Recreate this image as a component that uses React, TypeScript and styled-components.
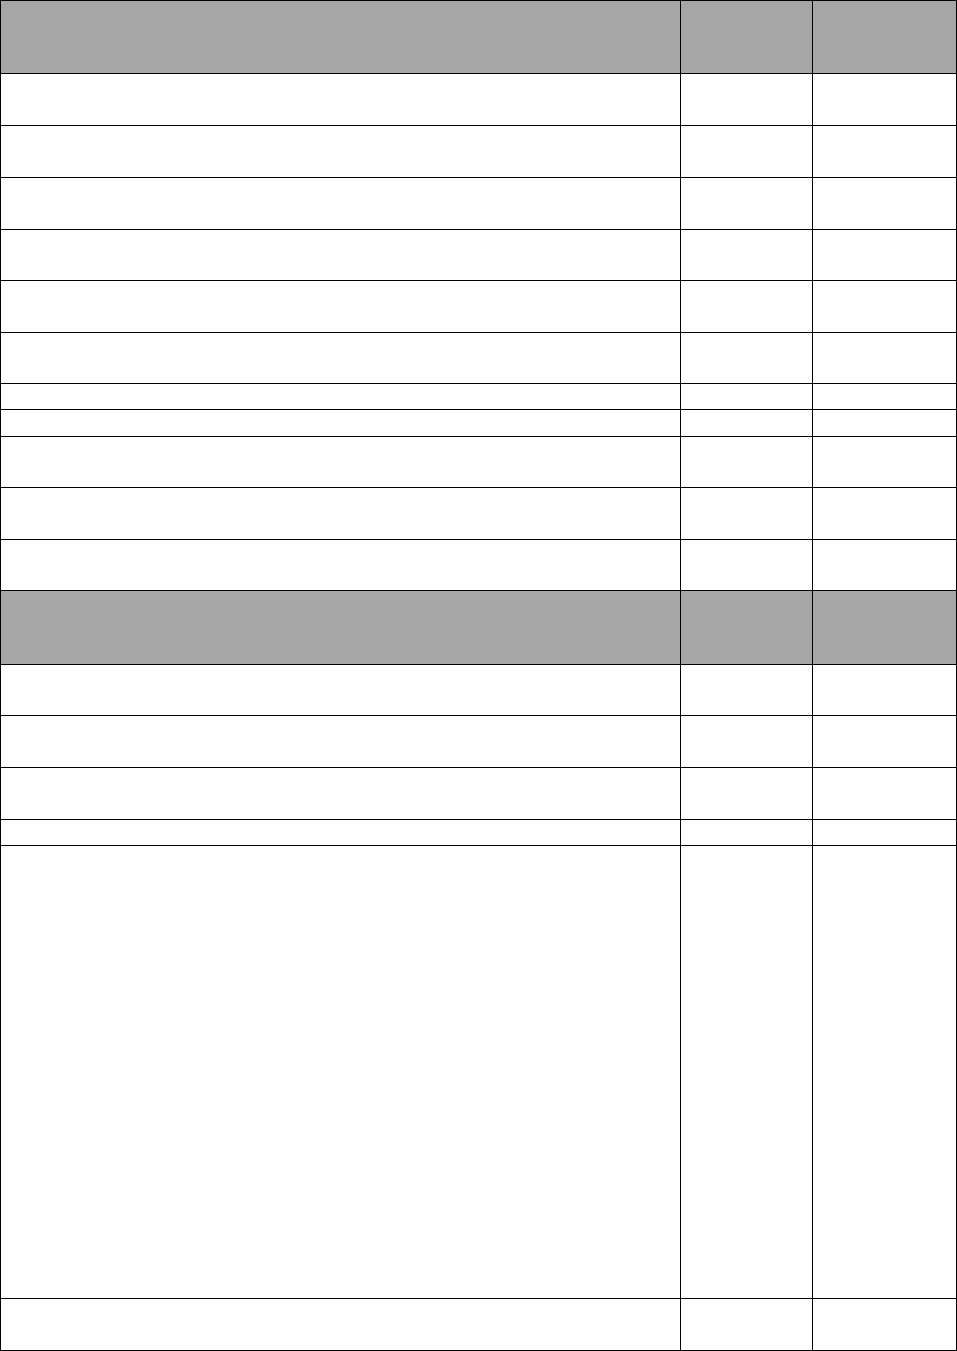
import React from "react";
import styled, { createGlobalStyle } from "styled-components";

const GlobalStyle = createGlobalStyle`
  html, body {
    margin: 0;
    padding: 0;
    background: #fff;
    font-family: "Liberation Sans", Arial, sans-serif;
  }
`;

type Row = { head?: boolean; height: number };

// heights measured between the grid lines of the sheet
const rows: Row[] = [
  { head: true, height: 73 },
  { height: 52 },
  { height: 52 },
  { height: 52 },
  { height: 51 },
  { height: 52 },
  { height: 51 },
  { height: 26 },
  { height: 27 },
  { height: 51 },
  { height: 52 },
  { height: 51 },
  { head: true, height: 74 },
  { height: 51 },
  { height: 52 },
  { height: 52 },
  { height: 26 },
  { height: 453 },
  { height: 52 },
];

const App: React.FC = () => {
  return (
    <>
      <GlobalStyle />
      <Sheet>
        {rows.map((row, i) => (
          <SheetRow key={i} style={{ height: row.height }}>
            <Cell $head={row.head} />
            <Cell $head={row.head} />
            <Cell $head={row.head} />
          </SheetRow>
        ))}
      </Sheet>
    </>
  );
};

export default App;

const Sheet = styled.div`
  width: 957px;
  box-sizing: border-box;
  border-top: 1px solid #000;
  border-left: 1px solid #000;
  display: flex;
  flex-direction: column;
`;

const SheetRow = styled.div`
  display: grid;
  grid-template-columns: 680px 132px 144px;
`;

const Cell = styled.div<{ $head?: boolean }>`
  box-sizing: border-box;
  border-right: 1px solid #000;
  border-bottom: 1px solid #000;
  background: ${(p) => (p.$head ? "#a6a6a6" : "#fff")};
  font-size: 13px;
`;
